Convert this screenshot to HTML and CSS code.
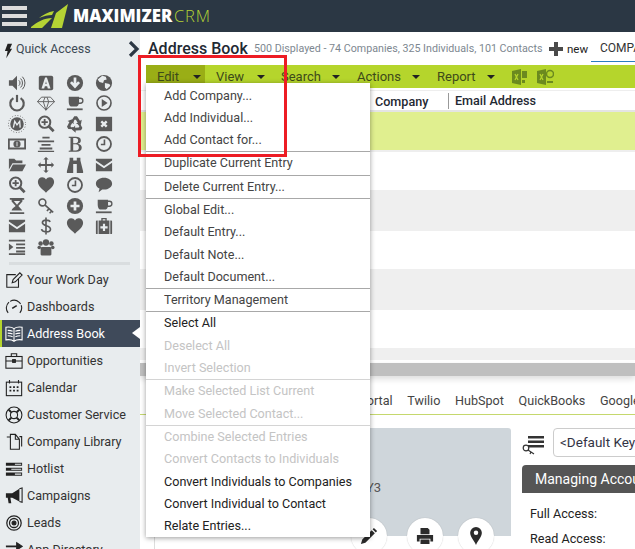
FILE: index.html
```html
<!DOCTYPE html>
<html lang="en">
<head>
<meta charset="utf-8">
<title>Address Book</title>
<link rel="stylesheet" href="styles.css">
</head>
<body>
<svg class="defs" width="0" height="0" aria-hidden="true">
  <symbol id="i-zoom" viewBox="0 0 20 20"><circle cx="8.5" cy="8" r="6.3" fill="none" stroke="currentColor" stroke-width="2.2"/><path d="M8.5 4.5v7M5 8h7" stroke="currentColor" stroke-width="2"/><path d="M13 12.5l5.5 5.5" stroke="currentColor" stroke-width="3"/></symbol>
  <symbol id="i-heart" viewBox="0 0 20 20"><path d="M10 18.5C5 14 1 11 1 6.500 1 3.500 3.200 1.500 5.800 1.500c1.800 0 3.200 1 4.200 2.500 1-1.500 2.400-2.500 4.200-2.500C16.800 1.500 19 3.500 19 6.500c0 4.500-4 7.500-9 12z"/></symbol>
  <symbol id="i-clock" viewBox="0 0 20 20"><circle cx="10" cy="10" r="7.800" fill="none" stroke="currentColor" stroke-width="2"/><path d="M10.500 5v5.500H6.500" fill="none" stroke="currentColor" stroke-width="1.800"/></symbol>
  <symbol id="i-coffee" viewBox="0 0 20 20"><path d="M3 3h11.500v1h1.500a3 3 0 0 1 0 7h-1.800c-.6 2-1.800 3-3.200 3H6.500C4 14 3 11 3 8zM14.500 5.500V9.500H16a2 2 0 0 0 0-4z" fill-rule="evenodd"/><rect x="1" y="16" width="17.500" height="2"/></symbol>
  <symbol id="i-mail" viewBox="0 0 20 20"><path d="M1 3h18v2L10 11 1 5zM1 7.500l9 6 9-6V17H1z"/></symbol>
</svg>

<header class="topbar">
  <div class="burger"><span></span><span></span><span></span></div>
  <svg class="logo-mark" viewBox="0 0 38 24"><path d="M37 0L31 24H20L25 9zM0 23C6 18 13 14 21 14L11 24H0zM8 14C12 11 17 8 23 7L21 11C17 11 13 12 8 14z" fill="#b5d334"/></svg>
  <div class="brand"><span class="brand-a">MAXIMIZER</span><span class="brand-b">CRM</span></div>
</header>

<div class="body">
  <aside class="side">
    <div class="side-head">
      <div class="qa">
        <svg class="bolt" viewBox="0 0 10 16"><path d="M4 0h5L6.500 5.500H9L2.500 16l1.500-8H1z"/></svg>
        <span>Quick Access</span>
      </div>
      <svg class="chev" viewBox="0 0 12 16"><path d="M2 1l7 7-7 7" fill="none" stroke="currentColor" stroke-width="3.200"/></svg>
    </div>

    <div class="quick">
      <svg viewBox="0 0 20 20"><path d="M1 7h4l5-5v16l-5-5H1z"/><path d="M12 7a4 4 0 0 1 0 6M14 5a7 7 0 0 1 0 10M16 3a10 10 0 0 1 0 14" fill="none" stroke="currentColor" stroke-width="1.100"/></svg>
      <svg viewBox="0 0 20 20"><rect x="2" y="2" width="16" height="16" rx="2"/><path d="M5 16l4-12h2l4 12h-3l-.7-2.500H8.700L8 16zM9.300 11h1.400L10 8z" fill="#e8ecee" fill-rule="evenodd"/></svg>
      <svg viewBox="0 0 20 20"><circle cx="10" cy="10" r="9"/><path d="M10 4v8M5.500 9l4.500 5 4.500-5" fill="none" stroke="#e8ecee" stroke-width="3"/></svg>
      <svg viewBox="0 0 20 20"><circle cx="10" cy="10" r="9"/><path d="M8 2l4 1 1 3-3 1-1 3-4-1-2-3zM11 10l5 1 1 2-4 4-2-2z" fill="#e8ecee"/></svg>

      <svg viewBox="0 0 20 20"><path d="M6 4.500a7.500 7.500 0 1 0 8 0" fill="none" stroke="currentColor" stroke-width="2.400"/><path d="M10 1v8" stroke="currentColor" stroke-width="2.400"/></svg>
      <svg viewBox="0 0 20 20"><path d="M5 3.500h10l4.500 5L10 18 .5 8.500zM.5 8.500h19M7 8.500l3 9.500 3-9.500-2-5M7 8.500l2-5" fill="none" stroke="currentColor" stroke-width="1"/></svg>
      <svg viewBox="0 0 20 20"><use href="#i-coffee"/></svg>
      <svg viewBox="0 0 20 20"><circle cx="10" cy="10" r="7.800" fill="none" stroke="currentColor" stroke-width="1.800"/><path d="M7.500 5.500l6.500 4.500-6.500 4.500z"/></svg>

      <svg viewBox="0 0 20 20"><circle cx="10" cy="10" r="7.500"/><circle cx="10" cy="10" r="9.500" fill="none" stroke="currentColor" stroke-dasharray="1 2"/><path d="M6 14l1.500-7 2.500 4 3-4 .5 7" fill="none" stroke="#e8ecee" stroke-width="1.500"/></svg>
      <svg viewBox="0 0 20 20"><use href="#i-zoom"/></svg>
      <svg viewBox="0 0 20 20"><g id="rc"><path d="M6 6.500L9.200 1.500h3l3.300 5 2-1.200-1 5.500-5.500-1 2-1.200-2-3.400h-1.600L8.300 8z"/></g><use href="#rc" transform="rotate(120 10 10.500)"/><use href="#rc" transform="rotate(240 10 10.500)"/></svg>
      <svg viewBox="0 0 20 20"><rect x="1" y="2" width="18" height="16"/><path d="M7 7l6 6M13 7l-6 6" stroke="#e8ecee" stroke-width="2.600"/></svg>

      <svg viewBox="0 0 20 20"><path d="M0 4h20v12H0zM2 6v8h16V6z" fill-rule="evenodd"/><circle cx="10" cy="10" r="4"/><path d="M10 7.500v5" stroke="#e8ecee"/></svg>
      <svg viewBox="0 0 20 20"><path d="M6 2h8v2H6zM1 6h18v2H1zM5 10h10v2H5zM3 14h14v2H3zM1 17.500h18v1.500H1z"/></svg>
      <svg viewBox="0 0 20 20"><path d="M3 2h8c3.500 0 5.500 1.500 5.500 4 0 2-1.300 3.200-3.300 3.700 2.600.4 4.300 2 4.300 4.400 0 2.900-2.500 4.400-6 4.400H3v-1l2-.3V3.300L3 3zm5 1.200V9.200h2.500c2 0 3-1 3-3s-1-3-3-3zm0 7.200v6.800h3c2 0 3.300-1.200 3.300-3.400s-1.300-3.400-3.500-3.400z" fill-rule="evenodd"/></svg>
      <svg viewBox="0 0 20 20"><use href="#i-clock"/></svg>

      <svg viewBox="0 0 20 20"><path d="M1 3h6l2 2h7v3H5L1 15zM5.500 9.500H20L16 17H1.500z"/></svg>
      <svg viewBox="0 0 20 20"><path d="M10 1l3 3h-2v5h5V7l3 3-3 3v-2h-5v5h2l-3 3-3-3h2v-5H4v2l-3-3 3-3v2h5V4H7z"/></svg>
      <svg viewBox="0 0 20 20"><path d="M4 2h4v3h4V2h4v3l3 12v2h-7V9H8v10H1v-2L4 5z"/></svg>
      <svg viewBox="0 0 20 20"><use href="#i-mail"/></svg>

      <svg viewBox="0 0 20 20"><use href="#i-zoom"/></svg>
      <svg viewBox="0 0 20 20"><use href="#i-heart"/></svg>
      <svg viewBox="0 0 20 20"><use href="#i-clock"/></svg>
      <svg viewBox="0 0 20 20"><path d="M10 2c5 0 9 3 9 6.500S15 15 10 15H8l-4 3 1-4.200C2.500 12.700 1 10.800 1 8.500 1 5 5 2 10 2z"/></svg>

      <svg viewBox="0 0 20 20"><path d="M2 1h16v2H2zM2 17h16v2H2zM4 3h12v2l-4.500 5 4.500 5H4c0-1.500 3-4 4.500-5L4 5z"/><path d="M6.500 4.500h7L10 8.500z" fill="#e8ecee"/></svg>
      <svg viewBox="0 0 20 20"><circle cx="6" cy="6" r="3.800" fill="none" stroke="currentColor" stroke-width="1.800"/><path d="M9 9l9 8M13 13.500l-2 2M16 16l-2 2" fill="none" stroke="currentColor" stroke-width="1.800"/></svg>
      <svg viewBox="0 0 20 20"><circle cx="10" cy="10" r="9"/><path d="M10 5v10M5 10h10" stroke="#e8ecee" stroke-width="3"/></svg>
      <svg viewBox="0 0 20 20"><use href="#i-coffee"/></svg>

      <svg viewBox="0 0 20 20"><use href="#i-mail"/></svg>
      <svg viewBox="0 0 20 20"><path d="M14.500 5.500C14 4 12 3.500 10 3.500 7.500 3.500 6 4.700 6 6.500c0 4 9 2.500 9 7 0 1.800-2 3-5 3-2.500 0-4.500-1-5-3M10 .5v19" fill="none" stroke="currentColor" stroke-width="1.800"/></svg>
      <svg viewBox="0 0 20 20"><use href="#i-heart"/></svg>
      <svg viewBox="0 0 20 20"><path d="M7 1h6v3h-1.500V2.500h-3V4H7zM4 4h12v15H4zM1 5a1 1 0 0 1 1-1h1v15H2a1 1 0 0 1-1-1zM17 4h1a1 1 0 0 1 1 1v13a1 1 0 0 1-1 1h-1z"/><path d="M10 7.500v8M6 11.500h8" stroke="#e8ecee" stroke-width="2.400"/></svg>

      <svg viewBox="0 0 20 20"><path d="M1 2h18v2H1zM9 6h10v2H9zM9 10h10v2H9zM9 14h10v2H9zM1 17h18v2H1zM1 6l5 4-5 4z"/></svg>
      <svg viewBox="0 0 20 20"><circle cx="10" cy="5" r="3.500"/><circle cx="4" cy="6" r="2.500"/><circle cx="16" cy="6" r="2.500"/><circle cx="2.500" cy="10.500" r="2"/><circle cx="17.500" cy="10.500" r="2"/><path d="M5.500 10h9c1.500 0 1.500 2 1.500 3v5c0 1-1 1.500-2 1.500H6c-1 0-2-.5-2-1.500v-5c0-1 0-3 1.500-3z"/></svg>
    </div>

    <div class="splitter"></div>

    <nav class="nav">
      <a class="nav-item"><svg viewBox="0 0 20 20"><path d="M15 8.500V18H2V4h10" fill="none"/><path d="M8 13l1-3.500L16.500 2 19 4.500 11.500 12z" fill="none"/></svg><span>Your Work Day</span></a>
      <a class="nav-item"><svg viewBox="0 0 20 20"><path d="M3.500 16.500a8.500 8.500 0 1 1 13 0" fill="none" stroke-dasharray="13 1.500"/><path d="M8 11.500l5-3" fill="none" stroke-width="1.800"/></svg><span>Dashboards</span></a>
      <a class="nav-item active"><svg viewBox="0 0 20 20"><path d="M10 4C8 2.500 4 2 1 2.500v14c3-.5 7 0 9 1.500 2-1.500 6-2 9-1.500v-14C16 2 12 2.500 10 4zM10 4v14M3 6c2 0 4 .3 5.500 1M3 9c2 0 4 .3 5.500 1M3 12c2 0 4 .3 5.500 1M11.500 7c1.500-.7 3.500-1 5.500-1M11.500 10c1.500-.7 3.500-1 5.500-1M11.500 13c1.500-.7 3.500-1 5.500-1" fill="none"/></svg><span>Address Book</span><i class="notch"></i></a>
      <a class="nav-item"><svg viewBox="0 0 20 20"><rect x="1" y="5" width="18" height="13" fill="none"/><path d="M7 5V2h6v3M1 10h18" fill="none"/><rect x="8.500" y="8.500" width="3" height="3" fill="#333"/></svg><span>Opportunities</span></a>
      <a class="nav-item"><svg viewBox="0 0 20 20"><rect x="1.500" y="3.500" width="17" height="15" fill="none"/><path d="M5 1v4M15 1v4" fill="none"/><path d="M5 9h2M9 9h2M13 9h2M5 13h2M9 13h2M13 13h2" fill="none" stroke-width="2"/></svg><span>Calendar</span></a>
      <a class="nav-item"><svg viewBox="0 0 20 20"><circle cx="10" cy="10" r="8.800" fill="none"/><circle cx="10" cy="10" r="4" fill="none"/><path d="M7 7L4 4M13 7l3-3M7 13l-3 3M13 13l3 3" fill="none" stroke-width="2.200"/></svg><span>Customer Service</span></a>
      <a class="nav-item"><svg viewBox="0 0 20 20"><path d="M2 4.500h4V18h10V7l-4.500-5.500H6V4.500M11.500 1.500V7H16M16 4h2.500V15" fill="none"/></svg><span>Company Library</span></a>
      <a class="nav-item"><svg viewBox="0 0 20 20"><path d="M1 3h18v3.500H1zM1 8.500h18V12H1zM1 14h18v3.500H1z" fill="#222" stroke="none"/><path d="M11 4.800h7M7 10.200h11M11 15.700h7" stroke="#e8ecee" fill="none"/></svg><span>Hotlist</span></a>
      <a class="nav-item"><svg viewBox="0 0 20 20"><path d="M1 7h7l8-5v14l-8-4H6l1 6H4l-1-6H1z" fill="#222" stroke="none"/><path d="M16 2l3-1v16l-3-1" fill="none"/></svg><span>Campaigns</span></a>
      <a class="nav-item"><svg viewBox="0 0 20 20"><circle cx="10" cy="10" r="8" fill="none" stroke-width="1.400"/><circle cx="10" cy="10" r="5" fill="none" stroke-width="1.400"/><circle cx="10" cy="10" r="2.200" fill="#222"/></svg><span>Leads</span></a>
      <a class="nav-item"><svg viewBox="0 0 20 20"><path d="M1 6h14" fill="none" stroke-width="2"/><path d="M13 2l6 4-6 4z" fill="#222"/></svg><span>App Directory</span></a>
    </nav>
  </aside>

  <main class="main">
    <div class="titlebar">
      <h1>Address Book</h1>
      <span class="count">500 Displayed - 74 Companies, 325 Individuals, 101 Contacts</span>
      <svg class="plus" viewBox="0 0 16 16"><path d="M6 1h4v5h5v4h-5v5H6v-5H1V6h5z"/></svg>
      <span class="new">new</span>
      <span class="tab-top">COMPANIES</span>
    </div>

    <div class="toolbar">
      <div class="tool t-edit on"><span>Edit</span><i></i></div>
      <div class="tool t-view"><span>View</span><i></i></div>
      <div class="tool t-search"><span>Search</span><i></i></div>
      <div class="tool t-actions"><span>Actions</span><i></i></div>
      <div class="tool t-report"><span>Report</span><i></i></div>
      <svg class="xl" viewBox="0 0 17 16"><path d="M0 2l9-2v16l-9-2z"/><path d="M10 2h5v7h-5zM10 11h3v3h-3z"/><path d="M3 5l3 6M6 5l-3 6" stroke="#b5d52c" stroke-width="1.300"/></svg>
      <svg class="xl" viewBox="0 0 17 16"><path d="M0 2l9-2v16l-9-2z"/><circle cx="13" cy="5" r="3.500" fill="none" stroke="currentColor" stroke-width="1.500"/><path d="M10 12h6v2h-6z"/><path d="M3 5l3 6M6 5l-3 6" stroke="#b5d52c" stroke-width="1.300"/></svg>
    </div>

    <div class="grid-head"><span class="col-co">Company</span><span class="col-em">Email Address</span></div>
    <div class="row sel"></div>
    <div class="row"></div>
    <div class="row alt"></div>
    <div class="row"></div>
    <div class="row alt"></div>
    <div class="row"></div>
    <div class="row alt short"></div>
    <div class="hscroll"></div>

    <div class="tabs">
      <span>Portal</span><span>Twilio</span><span>HubSpot</span><span>QuickBooks</span><span>Google</span>
    </div>

    <div class="lower">
      <section class="card">
        <div class="card-top"><span class="addr">Y3</span></div>
        <div class="card-btns">
          <span class="round"><svg viewBox="0 0 20 20"><path d="M1 19l1.500-5L13 3.500 16.500 7 6 17.500zM14 2.500l1.500-1.500 3.500 3.500L17.500 6z"/></svg></span>
          <span class="round"><svg viewBox="0 0 20 20"><path d="M5 1h8l2 2v5H5zM1 9h18v7h-3v-3H4v3H1zM5 14h10v5H5z"/></svg></span>
          <span class="round"><svg viewBox="0 0 20 20"><path d="M10 0a6.500 6.500 0 0 1 6.500 6.500C16.500 11 12 15 10 20 8 15 3.500 11 3.500 6.500A6.500 6.500 0 0 1 10 0zm0 4a2.500 2.500 0 1 0 0 5 2.500 2.500 0 0 0 0-5z" fill-rule="evenodd"/></svg></span>
        </div>
      </section>
      <section class="panel">
        <div class="key-row">
          <svg class="keylist" viewBox="0 0 24 24"><path d="M6 4h16v2.500H6zM6 8.500h16V11H6zM6 13h16v2.500H6z"/><circle cx="4" cy="16" r="2.800" fill="none" stroke="currentColor" stroke-width="1.200"/><path d="M6 18l6 4M9 20l-1 2" stroke="currentColor" stroke-width="1.200"/></svg>
          <div class="keybox">&lt;Default Key Fields&gt;</div>
        </div>
        <div class="mgr">Managing Account</div>
        <div class="mgr-body">
          <div>Full Access:</div>
          <div>Read Access:</div>
        </div>
      </section>
    </div>
  </main>
</div>

<div class="menu">
  <div class="mi">Add Company...</div>
  <div class="mi">Add Individual...</div>
  <div class="mi">Add Contact for...</div>
  <hr>
  <div class="mi">Duplicate Current Entry</div>
  <hr>
  <div class="mi">Delete Current Entry...</div>
  <hr>
  <div class="mi">Global Edit...</div>
  <div class="mi">Default Entry...</div>
  <div class="mi">Default Note...</div>
  <div class="mi">Default Document...</div>
  <hr>
  <div class="mi">Territory Management</div>
  <hr>
  <div class="mi dark">Select All</div>
  <div class="mi off">Deselect All</div>
  <div class="mi off">Invert Selection</div>
  <hr class="lt">
  <div class="mi off">Make Selected List Current</div>
  <div class="mi off">Move Selected Contact...</div>
  <hr class="lt">
  <div class="mi off">Combine Selected Entries</div>
  <div class="mi off">Convert Contacts to Individuals</div>
  <div class="mi dark">Convert Individuals to Companies</div>
  <div class="mi dark">Convert Individual to Contact</div>
  <div class="mi dark">Relate Entries...</div>
</div>
<div class="callout"></div>
</body>
</html>
```
FILE: styles.css
```css
* { box-sizing: border-box; }
html, body { margin: 0; height: 100%; overflow: hidden; background: #fff; }
body { font-family: Roboto, "Liberation Sans", sans-serif; font-size: 12.600px; color: #333; position: relative; }
.defs { position: absolute; }

.topbar { height: 32px; background: #2b3744; display: flex; align-items: center; }
.burger { width: 25px; margin-left: 2px; display: flex; flex-direction: column; gap: 4px; }
.burger span { height: 4px; background: #dcdcdc; }
.logo-mark { width: 38px; height: 24px; margin-left: 4px; flex: none; }
.brand { margin-left: 4px; display: flex; align-items: baseline; line-height: 1; }
.brand-a { font-family: "Open Sans", sans-serif; font-weight: 800; font-size: 16.800px; color: #fff; width: 101px; flex: none; white-space: nowrap; }
.brand-b { font-family: "Open Sans", sans-serif; font-weight: 300; font-size: 16.500px; color: #b5d334; letter-spacing: .8px; }

.body { display: flex; height: 517px; }
.side { width: 140px; flex: none; background: #e8ecee; overflow: hidden; }
.side-head { display: flex; justify-content: space-between; padding: 9px 0 0 4px; height: 40.500px; }
.qa { display: flex; align-items: flex-start; gap: 3px; color: #3d4a55; }
.qa span { line-height: 15px; font-size: 12.400px; }
.bolt { width: 9px; height: 16px; margin-top: 2px; fill: #222; }
.chev { width: 12px; height: 16px; color: #2b3744; }

.quick { display: grid; grid-template-columns: repeat(4, 29px); grid-auto-rows: 20.500px; padding-left: 2px; justify-items: center; align-items: center; color: #5a5a5a; fill: #5a5a5a; }
.quick svg { width: 18px; height: 18px; }

.splitter { height: 3px; margin: 5px 10px 0 9px; background: #d9dddf; }

.nav { margin-top: 1px; }
.nav-item { display: flex; align-items: center; height: 27px; padding-left: 5px; gap: 4px; color: #333; position: relative; border-left: 0 solid #b5d52c; }
.nav-item svg { width: 18px; height: 18px; flex: none; stroke: #222; stroke-width: 1.200; }
.nav-item.active { background: #3f4a5a; color: #fff; border-left-width: 2px; padding-left: 3px; }
.nav-item.active svg { stroke: #fff; }
.notch { position: absolute; right: 0; top: 7px; border: 6.500px solid transparent; border-right: 8px solid #fff; border-left: 0; }

.main { flex: 1; min-width: 0; overflow: hidden; }
.titlebar { height: 33px; padding-left: 8px; display: flex; align-items: center; white-space: nowrap; }
h1 { margin: 0; font-size: 16px; font-weight: 500; color: #1f2933; width: 106px; flex: none; }
.count { font-size: 10.700px; color: #7d8790; width: 294px; flex: none; }
.plus { width: 16px; height: 16px; flex: none; fill: #4a4a4a; }
.new { font-size: 11.500px; color: #222; margin-left: 3px; width: 24px; flex: none; }
.tab-top { font-size: 12px; color: #333; border-bottom: 1px solid #2a7cc0; height: 26px; line-height: 24px; padding-left: 9px; flex: none; }

.toolbar { height: 23px; margin-left: 6px; background: #b5d52c; display: flex; align-items: center; font-size: 13px; }
.tool { display: flex; align-items: center; height: 100%; padding-left: 11px; color: #3d4a1a; white-space: nowrap; flex: none; }
.tool i { width: 0; height: 0; border: 4px solid transparent; border-top: 4px solid #222; border-bottom: 0; }
.tool.on { background: #9aae16; }
.t-edit { width: 59px; }
.t-edit span { width: 36px; }
.t-view { width: 65px; }
.t-view span { width: 41px; }
.t-search { width: 76px; }
.t-search span { width: 51px; }
.t-actions { width: 80px; }
.t-actions span { width: 55px; }
.t-report { width: 75px; margin-right: 11px; }
.t-report span { width: 50px; }
.xl { width: 17px; height: 16px; color: #6b8a1f; fill: #6b8a1f; margin-right: 8px; flex: none; }

.grid-head { height: 22px; margin-top: 2px; padding: 1px 0 0 235px; border-top: 1px solid #eee; border-bottom: 2px solid #e4e4e4; display: flex; align-items: center; font-weight: 500; color: #1f2933; white-space: nowrap; }
.col-co { width: 73px; }
.col-em { border-left: 1px solid #999; padding-left: 6px; line-height: 16px; }
.row { height: 38px; background: #fff; }
.row.sel { background: #e0ef8f; border-bottom: 0; margin-bottom: 2px; box-shadow: 0 2px 0 #eee; }
.row.alt { height: 41px; background: #efefef; }
.row.short { height: 12px; }
.hscroll { height: 13px; margin-top: 3px; background: #bfbfbf; box-shadow: 0 3px 6px rgba(0,0,0,.14); }

.tabs { height: 39px; display: flex; align-items: center; gap: 14.700px; padding: 10px 0 0 219px; border-bottom: 1px solid #c5d86d; white-space: nowrap; color: #444; }
.tabs span { flex: none; }

.lower { display: flex; padding: 13px 0 0 14px; align-items: flex-start; }
.card { width: 357px; flex: none; border-left: 1px solid #ddd; }
.card-top { height: 108px; background: #cfd6db; border-radius: 3px 3px 0 0; padding: 52px 0 0 211px; color: #555; font-size: 13px; }
.addr { display: block; line-height: 16px; }
.card-btns { display: flex; margin-top: -18px; padding-left: 196px; }
.round { width: 36px; height: 36px; border-radius: 50%; background: #fff; display: flex; align-items: center; justify-content: center; fill: #2b2b2b; box-shadow: 0 0 1px rgba(0,0,0,.25); margin-right: 20px; }
.round + .round { margin-right: 15px; }
.round svg { width: 18px; height: 18px; }

.panel { margin-left: 11px; flex: none; width: 300px; }
.key-row { display: flex; gap: 10px; padding-bottom: 8px; }
.keylist { width: 24px; height: 24px; color: #333; fill: #333; margin-top: 4px; flex: none; }
.keybox { width: 260px; height: 29px; margin-left: -3px; border: 1px solid #ccc; border-radius: 4px; padding-left: 6px; line-height: 27px; font-size: 13.500px; color: #334; white-space: nowrap; }
.mgr { height: 28px; background: #555; color: #fff; font-size: 14px; line-height: 29px; padding-left: 13px; border-radius: 4px 4px 0 0; }
.mgr-body { padding: 13px 0 0 8px; color: #222; }
.mgr-body div { height: 25px; line-height: 16px; }

.menu { position: absolute; left: 146px; top: 83px; width: 224px; height: 454px; background: #fff; box-shadow: 0 1px 5px rgba(0,0,0,.4); padding-top: 1.500px; color: #444; z-index: 2; }
.mi { height: 22.300px; line-height: 22px; padding-left: 18px; white-space: nowrap; }
.mi.dark { color: #222; }
.mi.off { color: #c4c4c4; }
.menu hr { margin: 0; border: 0; border-top: 1px solid #a8a8a8; height: 1px; }
.menu hr.lt { border-top-color: #d4d4d4; }

.callout { position: absolute; left: 138px; top: 55px; width: 149px; height: 102px; border: 3px solid #ed1c24; z-index: 3; }
```
